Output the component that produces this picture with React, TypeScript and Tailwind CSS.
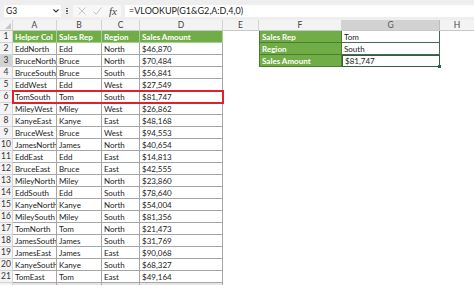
import { ReactNode } from "react";

const rows: [string, string, string, string][] = [
  ["EddNorth", "Edd", "North", "$46,870"],
  ["BruceNorth", "Bruce", "North", "$70,484"],
  ["BruceSouth", "Bruce", "South", "$56,841"],
  ["EddWest", "Edd", "West", "$27,549"],
  ["TomSouth", "Tom", "South", "$81,747"],
  ["MileyWest", "Miley", "West", "$26,862"],
  ["KanyeEast", "Kanye", "East", "$48,168"],
  ["BruceWest", "Bruce", "West", "$94,553"],
  ["JamesNorth", "James", "North", "$40,654"],
  ["EddEast", "Edd", "East", "$14,813"],
  ["BruceEast", "Bruce", "East", "$42,555"],
  ["MileyNorth", "Miley", "North", "$23,860"],
  ["EddSouth", "Edd", "South", "$78,640"],
  ["KanyeNorth", "Kanye", "North", "$54,004"],
  ["MileySouth", "Miley", "South", "$81,356"],
  ["TomNorth", "Tom", "North", "$21,473"],
  ["JamesSouth", "James", "South", "$31,769"],
  ["JamesEast", "James", "East", "$90,068"],
  ["KanyeSouth", "Kanye", "South", "$68,327"],
  ["TomEast", "Tom", "East", "$49,164"],
];

const lookup: [string, string][] = [
  ["Sales Rep", "Tom"],
  ["Region", "South"],
  ["Sales Amount", "$81,747"],
];

function RowHead({ n, active }: { n?: number; active?: boolean }) {
  return (
    <div
      className={`w-[13px] shrink-0 flex items-center justify-center border-r border-b border-[#d4d4d4] text-[8.5px] text-[#333] ${
        active ? "bg-[#d2d2d2]" : "bg-[#f3f3f3]"
      }`}
    >
      {n}
    </div>
  );
}

function Cell({ w, children, className = "" }: { w: string; children?: ReactNode; className?: string }) {
  return (
    <div className={`${w} shrink-0 h-full flex items-center pl-[2px] overflow-hidden whitespace-nowrap border-r border-b ${className}`}>
      {children}
    </div>
  );
}

export default function App() {
  return (
    <div
      className="w-[474px] h-[285px] overflow-hidden bg-white text-[#222]"
      style={{ fontFamily: "Lato, 'Liberation Sans', sans-serif" }}
    >
      {/* Formula bar */}
      <div className="h-[20px] bg-[#eeeeee] flex items-center gap-[4px] pl-[4px] pt-[2px]">
        <div className="w-[57px] h-[12px] bg-white flex items-center justify-between px-[2px] text-[8.5px]">
          <span>G3</span>
          <svg width="6" height="4" viewBox="0 0 6 4">
            <path d="M0.5 0.5 L3 3 L5.5 0.5" stroke="#333" strokeWidth="1.1" fill="none" />
          </svg>
        </div>
        <div className="w-[4px] flex flex-col items-center gap-[1px]">
          <span className="w-[1.5px] h-[1.5px] bg-[#666]" />
          <span className="w-[1.5px] h-[1.5px] bg-[#666]" />
          <span className="w-[1.5px] h-[1.5px] bg-[#666]" />
        </div>
        <div className="h-[12px] w-[48px] bg-[#f7f7f7] flex items-center gap-[7px] pl-[5px]">
          <svg width="8" height="8" viewBox="0 0 8 8">
            <path d="M0.5 0.5 L7.5 7.5 M7.5 0.5 L0.5 7.5" stroke="#c4c4c4" strokeWidth="1" />
          </svg>
          <svg width="9" height="8" viewBox="0 0 9 8">
            <path d="M0.5 4.5 L3.2 7.2 L8.5 0.5" stroke="#c4c4c4" strokeWidth="1" fill="none" />
          </svg>
          <span className="text-[11px] italic text-[#444] leading-none" style={{ fontFamily: "'Liberation Serif', serif" }}>
            fx
          </span>
        </div>
        <div className="flex-1 h-[12px] bg-white flex items-center pl-[4px] text-[9px]">
          =VLOOKUP(G1&amp;G2,A:D,4,0)
        </div>
      </div>

      {/* Column headers */}
      <div className="h-[11px] flex text-[8.5px] text-[#444] bg-[#f3f3f3] border-b border-[#c8c8c8]">
        <div className="w-[13px] shrink-0 border-r border-[#d4d4d4] flex items-end justify-end pr-[1px] pb-[1px]">
          <svg width="6" height="6" viewBox="0 0 6 6">
            <path d="M6 0 L6 6 L0 6 Z" fill="#c4c4c4" />
          </svg>
        </div>
        {[
          ["A", "w-[44px]"],
          ["B", "w-[45px]"],
          ["C", "w-[38px]"],
          ["D", "w-[83px]"],
          ["E", "w-[36px]"],
          ["F", "w-[83px]"],
        ].map(([l, w]) => (
          <div key={l} className={`${w} shrink-0 flex items-center justify-center border-r border-[#d4d4d4]`}>
            {l}
          </div>
        ))}
        <div className="w-[98px] shrink-0 flex items-center justify-center bg-[#d2d2d2] text-[#555] border-r border-[#bdbdbd]">
          G
        </div>
        <div className="flex-1 flex items-center justify-center">H</div>
      </div>

      {/* Row 1: headers */}
      <div className="h-[12px] flex text-[8px]">
        <RowHead n={1} />
        <div className="flex h-full bg-[#70ad47] text-white font-bold">
          <Cell w="w-[44px]" className="border-[#a9d08e]">Helper Col</Cell>
          <Cell w="w-[45px]" className="border-[#a9d08e]">Sales Rep</Cell>
          <Cell w="w-[38px]" className="border-[#a9d08e]">Region</Cell>
          <Cell w="w-[83px]" className="border-[#a9d08e]">Sales Amount</Cell>
        </div>
        <div className="w-[36px] shrink-0" />
        <Cell w="w-[83px]" className="bg-[#70ad47] text-white font-bold border-[#4e7d30] border-l">
          {lookup[0][0]}
        </Cell>
        <Cell w="w-[98px]" className="border-[#4a6656]">{lookup[0][1]}</Cell>
      </div>

      {rows.map((r, i) => {
        const n = i + 2;
        const hit = n === 6;
        const side = n <= 3 ? lookup[n - 1] : null;
        return (
          <div key={n} className="h-[12px] flex text-[8px]">
            <RowHead n={n} active={n === 3} />
            <div
              className={`flex h-full ${hit ? "outline-2 outline-[#e0202c] -outline-offset-1 relative z-10" : ""}`}
            >
              <Cell w="w-[44px]" className="border-[#a6a6a6]">{r[0]}</Cell>
              <Cell w="w-[45px]" className="border-[#a6a6a6]">{r[1]}</Cell>
              <Cell w="w-[38px]" className="border-[#a6a6a6]">{r[2]}</Cell>
              <Cell w="w-[83px]" className="border-[#a6a6a6]">{r[3]}</Cell>
            </div>
            {side && (
              <>
                <div className="w-[36px] shrink-0" />
                <Cell w="w-[83px]" className="bg-[#70ad47] text-white font-bold border-[#4e7d30] border-l">
                  {side[0]}
                </Cell>
                {n === 3 ? (
                  <div className="relative w-[98px] shrink-0 h-full flex items-center pl-[2px] border border-[#2f5f45]">
                    {side[1]}
                    <span className="absolute -right-[2px] -bottom-[2px] w-[3px] h-[3px] bg-[#2f5f45]" />
                  </div>
                ) : (
                  <Cell w="w-[98px]" className="border-[#4a6656]">{side[1]}</Cell>
                )}
              </>
            )}
          </div>
        );
      })}

      <div className="h-[12px] flex">
        <RowHead />
        <div className="flex h-full">
          <Cell w="w-[44px]" className="border-[#a6a6a6] bg-[#e6e6e6]" />
          <Cell w="w-[45px]" className="border-[#a6a6a6] bg-[#e6e6e6]" />
          <Cell w="w-[38px]" className="border-[#a6a6a6] bg-[#e6e6e6]" />
          <Cell w="w-[83px]" className="border-[#a6a6a6] bg-[#e6e6e6]" />
        </div>
      </div>
    </div>
  );
}
